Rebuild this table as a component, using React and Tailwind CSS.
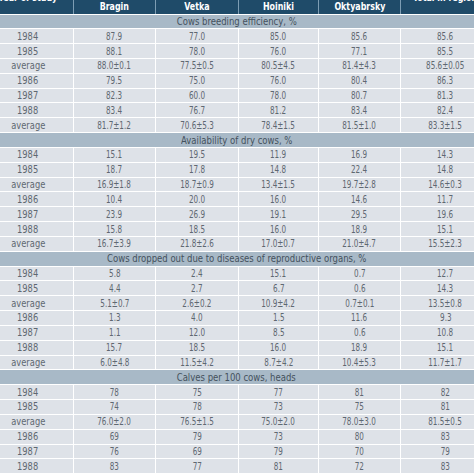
import React from "react";

const cols = "grid grid-cols-[90px_82px_83px_80px_82px_90px]";

const sections = [
  {
    title: "Cows breeding efficiency, %",
    rows: [
      ["1984", "87.9", "77.0", "85.0", "85.6", "85.6"],
      ["1985", "88.1", "78.0", "76.0", "77.1", "85.5"],
      ["average", "88.0±0.1", "77.5±0.5", "80.5±4.5", "81.4±4.3", "85.6±0.05"],
      ["1986", "79.5", "75.0", "76.0", "80.4", "86.3"],
      ["1987", "82.3", "60.0", "78.0", "80.7", "81.3"],
      ["1988", "83.4", "76.7", "81.2", "83.4", "82.4"],
      ["average", "81.7±1.2", "70.6±5.3", "78.4±1.5", "81.5±1.0", "83.3±1.5"],
    ],
  },
  {
    title: "Availability of dry cows, %",
    rows: [
      ["1984", "15.1", "19.5", "11.9", "16.9", "14.3"],
      ["1985", "18.7", "17.8", "14.8", "22.4", "14.8"],
      ["average", "16.9±1.8", "18.7±0.9", "13.4±1.5", "19.7±2.8", "14.6±0.3"],
      ["1986", "10.4", "20.0", "16.0", "14.6", "11.7"],
      ["1987", "23.9", "26.9", "19.1", "29.5", "19.6"],
      ["1988", "15.8", "18.5", "16.0", "18.9", "15.1"],
      ["average", "16.7±3.9", "21.8±2.6", "17.0±0.7", "21.0±4.7", "15.5±2.3"],
    ],
  },
  {
    title: "Cows dropped out due to diseases of reproductive organs, %",
    rows: [
      ["1984", "5.8", "2.4", "15.1", "0.7", "12.7"],
      ["1985", "4.4", "2.7", "6.7", "0.6", "14.3"],
      ["average", "5.1±0.7", "2.6±0.2", "10.9±4.2", "0.7±0.1", "13.5±0.8"],
      ["1986", "1.3", "4.0", "1.5", "11.6", "9.3"],
      ["1987", "1.1", "12.0", "8.5", "0.6", "10.8"],
      ["1988", "15.7", "18.5", "16.0", "18.9", "15.1"],
      ["average", "6.0±4.8", "11.5±4.2", "8.7±4.2", "10.4±5.3", "11.7±1.7"],
    ],
  },
  {
    title: "Calves per 100 cows, heads",
    rows: [
      ["1984", "78", "75", "77", "81", "82"],
      ["1985", "74", "78", "73", "75", "81"],
      ["average", "76.0±2.0", "76.5±1.5", "75.0±2.0", "78.0±3.0", "81.5±0.5"],
      ["1986", "69", "79", "73", "80", "83"],
      ["1987", "76", "69", "79", "70", "79"],
      ["1988", "83", "77", "81", "72", "83"],
    ],
  },
];

const headers = ["Bragin", "Vetka", "Hoiniki", "Oktyabrsky"];

export default function App() {
  return (
    <div
      className="w-[474px] h-[474px] overflow-hidden bg-white"
      style={{ fontFamily: '"Liberation Sans Narrow", "DejaVu Sans Condensed", "Liberation Sans", sans-serif' }}
    >
      <div className="ml-[-17px] mt-[-16px] w-[507px]">
        <div className={`${cols} h-[30.5px] bg-[#1f4b69] text-white font-bold text-[11px] leading-[13px] border-b border-white`}>
          <div className="flex items-center justify-center pb-[2px]">
            <span className="inline-block whitespace-nowrap scale-x-[0.8]">Year of study</span>
          </div>
          {headers.map((h) => (
            <div key={h} className="flex items-end justify-center pb-[1px] border-l border-[#7d9db3]">
              <span className="inline-block whitespace-nowrap scale-x-[0.8]">{h}</span>
            </div>
          ))}
          <div className="flex items-center justify-center pb-[2px] border-l border-[#7d9db3]">
            <span className="inline-block whitespace-nowrap scale-x-[0.8]">Total in region</span>
          </div>
        </div>
        {sections.map((s) => (
          <div key={s.title}>
            <div className="h-[14.83px] bg-[#a8b9c7] border-b border-white flex items-center justify-center text-[11px] leading-[13px] text-[#44515d]">
              <span className="inline-block whitespace-nowrap scale-x-[0.86]">{s.title}</span>
            </div>
            {s.rows.map((r, i) => (
              <div key={i} className={`${cols} h-[14.83px] bg-[#dee2e8] border-b border-white text-[11px] leading-[13px] text-[#5f6871]`}>
                {r.map((c, j) => (
                  <div key={j} className={`flex items-center justify-center ${j > 0 ? "border-l border-white" : ""}`}>
                    <span className={`inline-block whitespace-nowrap ${j === 0 ? "scale-x-[0.84]" : "scale-x-[0.73]"}`}>{c}</span>
                  </div>
                ))}
              </div>
            ))}
          </div>
        ))}
      </div>
    </div>
  );
}
